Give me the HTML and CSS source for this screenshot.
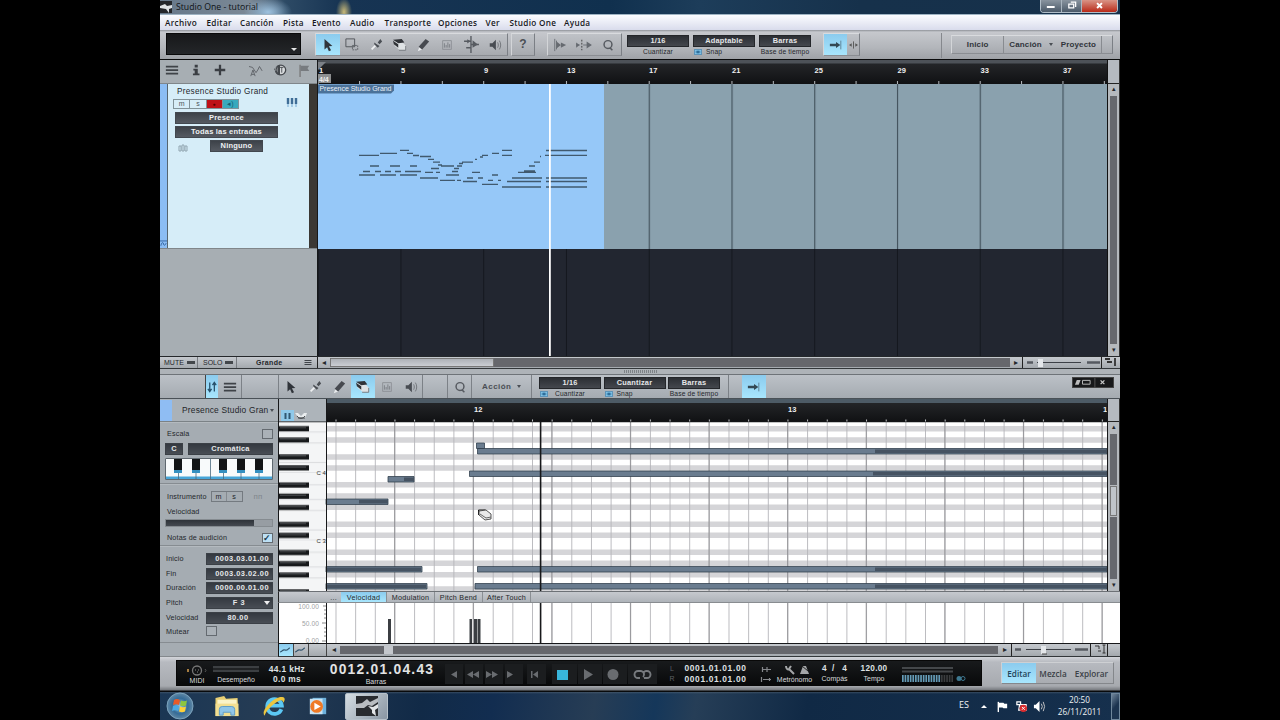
FILE: index.html
```
<!DOCTYPE html>
<html lang="es">
<head>
<meta charset="utf-8">
<title>Studio One - tutorial</title>
<link rel="stylesheet" href="styles.css">
</head>
<body>
<svg class="defs" width="0" height="0">
  <defs>
    <symbol id="i-arrow" viewBox="0 0 16 16"><path d="M4 1l9 8-4 .5 2.500 4.500-2.500 1-2-4.500L4 13z" fill="#30343a"/></symbol>
    <symbol id="i-range" viewBox="0 0 16 16"><path d="M1 1h10v9H1z" fill="none" stroke="#4a4e54"/><path d="M8.500 8.500h6v5h-6z" fill="none" stroke="#5a5e64" stroke-dasharray="2 1"/></symbol>
    <symbol id="i-split" viewBox="0 0 16 16"><path d="M3 13l6-6" stroke="#eef0f2" stroke-width="2"/><path d="M6 5l6 4-2 2-4-4zM10 5l3-4 2 3-3 3z" fill="#4a4e54"/></symbol>
    <symbol id="i-eraser" viewBox="0 0 16 16"><path d="M1 4l8-1 6 6v5H8L2 9z" fill="#dfe3e5"/><path d="M0 2l10-1 3 4-7 1zM0 3l6 4v4L1 7z" fill="#303338"/><path d="M7 14h7.500V9" fill="none" stroke="#6c7074"/></symbol>
    <symbol id="i-paint" viewBox="0 0 16 16"><path d="M2 15l2-5 3 3z" fill="#e9ebed"/><path d="M3 10l8-9 4 3-8 9z" fill="#474a50"/></symbol>
    <symbol id="i-mute" viewBox="0 0 16 16"><path d="M3 3h10v10H3z" fill="none" stroke="#8b8f95"/><path d="M5 11V6m2 5V8m2 3V5m2 6V7" stroke="#777b81"/></symbol>
    <symbol id="i-bend" viewBox="0 0 16 16"><path d="M7.500 0v16M1 5h6M3 11h4M8 8h7" stroke="#575b61" stroke-width="1.300"/><path d="M9 4l5 4-5 3zM4 3l3 2-3 2z" fill="#575b61"/></symbol>
    <symbol id="i-sound" viewBox="0 0 16 16"><path d="M2 6h3l4-4v12l-4-4H2z" fill="#484c52"/><path d="M11 5c1 2 1 4 0 6m2-8c2 3 2 7 0 10" fill="none" stroke="#6b6f75"/></symbol>
    <symbol id="i-lens" viewBox="0 0 16 16"><path d="M8 3a4.500 4.500 0 1 1 0 9a4.500 4.500 0 0 1 0-9M10 11l3 3" fill="none" stroke="#575b61" stroke-width="1.700"/></symbol>
    <symbol id="i-strip" viewBox="0 0 16 16"><path d="M2 1v14M4 3v10" stroke="#666a70"/><path d="M4 4l5 4-5 4zM9 5l6 3-6 3z" fill="#666a70"/></symbol>
    <symbol id="i-strip2" viewBox="0 0 20 16"><path d="M7.500 2v12" stroke="#333" stroke-dasharray="2 1.500"/><path d="M1 5l4 3-4 3zM13 4l6 4-6 4z" fill="#666a70"/><path d="M1 8h4M9 8h8" stroke="#666a70"/></symbol>
    <symbol id="i-follow" viewBox="0 0 16 16"><path d="M1 6.500h7V4.500l5 3.500-5 3.500v-2H1z" fill="#344954"/><path d="M13.500 3v10" stroke="#5a7d8e"/></symbol>
    <symbol id="i-list" viewBox="0 0 16 16"><path d="M1 4h14M1 8h14M1 12h14" stroke="#3f4348" stroke-width="2"/></symbol>
    <symbol id="i-keys" viewBox="0 0 14 10"><path d="M3 0v6M7 0v6M11 0v6" stroke="#3f6d96" stroke-width="2.400"/><path d="M3 6v3M7 6v3M11 6v3" stroke="#a4cbe6" stroke-width="2"/></symbol>
    <symbol id="i-curve" viewBox="0 0 12 8"><path d="M1 6c3 0 2-3 5-2s3-2 5-2" fill="none" stroke="#31536c" stroke-width="1.200"/></symbol>
  </defs>
</svg>
<div class="screen">
  <header class="titlebar">
    <svg class="logo" viewBox="0 0 12 12"><path d="M0 0h12v12H0z" fill="#24272b"/><path d="M0 5l5-2 2 2 5-1v3L9 8v4L6 8 0 7z" fill="#dfe3e6"/></svg>
    <span class="win-title">Studio One - tutorial</span>
    <div class="win-buttons">
      <span><svg viewBox="0 0 20 12"><path d="M6 6h8v2H6z" fill="#fff"/></svg></span>
      <span><svg viewBox="0 0 20 12"><path d="M7 4h5v4H7zM9 2h5v5" fill="none" stroke="#fff" stroke-width="1.300"/></svg></span>
      <span class="close"><svg viewBox="0 0 36 12"><path d="M15.500 3l5 5m0-5l-5 5" stroke="#fff" stroke-width="2"/></svg></span>
    </div>
  </header>
  <nav class="menubar">
    <span class="m1">Archivo</span><span class="m2">Editar</span><span class="m3">Canción</span><span class="m4">Pista</span><span class="m5">Evento</span><span class="m6">Audio</span><span class="m7">Transporte</span><span class="m8">Opciones</span><span class="m9">Ver</span><span class="m10">Studio One</span><span>Ayuda</span>
  </nav>

  <div class="toolbar">
    <div class="readout"><i></i></div>
    <div class="tools raised">
      <span class="on"><svg><use href="#i-arrow"/></svg></span><span><svg><use href="#i-range"/></svg></span><span><svg><use href="#i-split"/></svg></span><span><svg><use href="#i-eraser"/></svg></span><span><svg><use href="#i-paint"/></svg></span><span><svg><use href="#i-mute"/></svg></span><span><svg class="big"><use href="#i-bend"/></svg></span><span><svg><use href="#i-sound"/></svg></span>
    </div>
    <div class="help raised">?</div>
    <div class="strips raised"><svg><use href="#i-strip"/></svg><svg class="wide"><use href="#i-strip2"/></svg><svg><use href="#i-lens"/></svg></div>
    <div class="opt q"><b>1/16</b><em>Cuantizar</em></div>
    <div class="opt q"><b>Adaptable</b><em class="lead"><i class="led"></i>Snap</em></div>
    <div class="opt base"><b>Barras</b><em>Base de tiempo</em></div>
    <div class="follow raised"><span class="on"><svg><use href="#i-follow"/></svg></span><span class="half"><svg viewBox="0 0 10 12"><path d="M5 2v8" stroke="#555"/><path d="M0 6l3-2v4zM10 6L7 4v4z" fill="#555"/></svg></span></div>
    <div class="pages-wrap"><div class="pages raised"><span class="p1">Inicio</span><span class="p2">Canción</span><span class="p3"><i class="down"></i></span><span class="p4">Proyecto</span><span class="p5"></span></div></div>
  </div>

  <main class="arranger">
    <aside class="tracks">
      <div class="track-tools">
        <svg><use href="#i-list"/></svg>
        <svg viewBox="0 0 16 16"><path d="M6.500 2h3.500v3H6.500zM5 6.500h5V12h2v2H4.500v-2h2V8.500H5z" fill="#3a3e43"/></svg>
        <svg viewBox="0 0 16 16"><path d="M8 2v12M2 8h12" stroke="#3a3e43" stroke-width="2.600"/></svg>
        <svg class="auto" viewBox="0 0 16 16"><path d="M0 4l4 1 4 6 2-3 2-4 3 5" fill="none" stroke="#5a5e63"/><path d="M2 15l2.500-7L7 15M3 13h3" fill="none" stroke="#5a5e63"/></svg>
        <svg viewBox="0 0 16 16"><circle cx="9" cy="8" r="5.500" fill="#d6d9db" stroke="#44484d" stroke-width="1.500"/><path d="M8 2a6 6 0 0 0 0 12zM1 7l4-4v8z" fill="#44484d"/><path d="M8 5h4M10 5v6" stroke="#44484d"/></svg>
        <svg viewBox="0 0 16 16"><path d="M3.500 2v14" stroke="#777" stroke-width="1.500"/><path d="M4 3h10l-2 3 2 3H4z" fill="#777b7f"/></svg>
      </div>
      <div class="track">
        <div class="track-color"><svg viewBox="0 0 8 8"><path d="M0 .5h8M1 6c1-5 3-4 3-2s2 2 3-1" fill="none" stroke="#2b5f9e"/></svg></div>
        <div class="track-info">
          <div class="track-name">Presence Studio Grand</div>
          <div class="track-row"><div class="msr"><span>m</span><span>s</span><span class="rec">●</span><span class="mon">◂)</span></div><svg class="keysicon"><use href="#i-keys"/></svg></div>
          <div class="slot">Presence</div>
          <div class="slot">Todas las entradas</div>
          <div class="slot-row"><svg viewBox="0 0 10 8"><path d="M1 2h2v5H1zM4 1h2v6H4zM7 2h2v5H7z" fill="none" stroke="#91a5b0"/></svg><div class="slot small">Ninguno</div></div>
        </div>
        <div class="track-meter"></div>
      </div>
      <div class="track-void"></div>
    </aside>
    <section class="timeline">
      <svg viewBox="318 60 790 296" width="790" height="296">
        <defs>
          <linearGradient id="rul" x2="0" y2="1"><stop offset="0" stop-color="#27292c"/><stop offset="1" stop-color="#101113"/></linearGradient>
          <pattern id="bars" x="317.700" y="0" width="82.750" height="400" patternUnits="userSpaceOnUse"><path d="M.5 0v400" stroke="#42525c" stroke-width="1.300"/></pattern>
          <pattern id="barsd" x="317.700" y="0" width="82.750" height="400" patternUnits="userSpaceOnUse"><path d="M.5 0v400" stroke="#14171e"/></pattern>
          <pattern id="ticks" x="317.700" y="0" width="41.375" height="400" patternUnits="userSpaceOnUse"><path d="M.5 81v3" stroke="#b9bcc0"/></pattern>
        </defs>
        <path d="M318 60h790v24H318z" fill="url(#rul)"/><path d="M318 60h790v3.500H318z" fill="#4d5258"/>
        <path d="M318 80h790v4H318z" fill="url(#ticks)"/>
        <path d="M318 84h790v165H318z" fill="#8aa1ae"/><path d="M604 84h504v165H604z" fill="url(#bars)"/>
        <path d="M318 249h790v107H318z" fill="#222630"/><path d="M318 249h790v107H318z" fill="url(#barsd)"/>
        <path d="M318 84h286v165H318z" fill="#96c8f8"/>
        <path d="M318 62h8l-8 8z" fill="#7b8086"/>
        <path d="M318 74h13v9h-13z" fill="#8d8f90"/>
        <path d="M318 84.500h76v6l-3 3h-73z" fill="#4b7299"/>
        <g class="ruler-num"><text x="319" y="72.500">1</text><text x="401" y="72.500">5</text><text x="484" y="72.500">9</text><text x="567" y="72.500">13</text><text x="649" y="72.500">17</text><text x="732" y="72.500">21</text><text x="814.500" y="72.500">25</text><text x="897.500" y="72.500">29</text><text x="980.500" y="72.500">33</text><text x="1063" y="72.500">37</text></g>
        <text class="sig" x="319" y="81.500">4/4</text>
        <text class="clip-name" x="319.500" y="91.200" textLength="72">Presence Studio Grand</text>
        <g stroke="#40596e" stroke-width="1.300" fill="none">
          <path d="M359 155.300h20M380 153.400h17M400 150.400h9M407 153.300h6M413 155.500h6M420 156.500h11M428 159.300h6M433 162.200h7M438 165h4M441 166h13M457 166h5M459 163.500h4M462 162.200h11M475 159.400h2M480 157h3M482 155.300h6M492 153.400h7M502 150.400h10M502 155.300h10"/>
          <path d="M359 175h16M380 175h16M400 175h17M370 166h9M390 166h10M410 166h7M363 171.500h7M375 171.500h6M385 171.500h6M395 171.500h6M405 171.500h16M425 172.300h8M436 172.300h4M431 168.500h8M420 178h18M440 180.300h15M446 175h13M452 171.500h6M454 168.500h5M457 180.300h4M463 181.500h14M467 178h6M478 178h5M472 172.300h8M482 184.300h16M488 180.300h5M492 175h6M498 180.300h3"/>
          <path d="M502 187h39M546 187h41M507 181.500h34M546 181.500h41M512 178h30M546 178h41M518 172.300h18M524 171h11M529 166h6M534 162.200h6M540 156.500h1M545 155.300h42M546 150.500h41"/>
        </g>
        <path d="M549 84h1.800v272H549z" fill="#fff"/>
        <path d="M1107 60h1v296h-1z" fill="#111"/>
      </svg>
    </section>
    <div class="vscroll"><div class="corner"></div><span>▴</span><i></i><span>▾</span></div>
  </main>

  <div class="hbar">
    <div class="cell mute">MUTE<i></i></div><div class="cell solo">SOLO<i></i></div><div class="cell size">Grande<svg><use href="#i-list"/></svg></div>
    <div class="larr">◂</div><div class="htrack"><i class="thumb-wide"></i></div><div class="larr r">▸</div>
    <div class="zoomer"><svg viewBox="0 0 78 11"><path d="M4 5.500h6M64 5.500h13" stroke="#555960" stroke-width="2.500"/><path d="M14 5.500h44" stroke="#3c4046"/><path d="M15 2h5v8h-5z" fill="#e4e7ea"/></svg></div><div class="fit"><svg viewBox="0 0 12 10"><path d="M0 2h5M2 5h5M10 1v8" stroke="#333" stroke-width="1.800"/></svg></div>
  </div>
  <div class="splitter"><i></i></div>

  <div class="edit-tools">
    <div class="blank1"></div>
    <span class="on narrow"><svg viewBox="0 0 12 14"><path d="M3 2v9M1 9l2 3 2-3M8 12V3M6 5l2-3 2 3" fill="none" stroke="#28516b" stroke-width="1.400"/></svg></span>
    <span class="rule"><svg><use href="#i-list"/></svg></span><div class="blank2 rule"></div>
    <span><svg><use href="#i-arrow"/></svg></span><span><svg><use href="#i-split"/></svg></span><span><svg><use href="#i-paint"/></svg></span><span class="on"><svg><use href="#i-eraser"/></svg></span><span><svg><use href="#i-mute"/></svg></span><span class="rule"><svg><use href="#i-sound"/></svg></span><div class="blank3 rule"></div><span class="rule"><svg><use href="#i-lens"/></svg></span>
    <div class="action rule">Acción<i class="down"></i></div>
    <div class="opt q"><b>1/16</b><em class="lead2"><i class="led"></i>Cuantizar</em></div>
    <div class="opt q"><b>Cuantizar</b><em class="lead"><i class="led"></i>Snap</em></div>
    <div class="opt base"><b>Barras</b><em>Base de tiempo</em></div>
    <div class="blank4 rule"></div><div class="blank5"></div>
    <span class="on"><svg><use href="#i-follow"/></svg></span>
    <div class="dock"><svg viewBox="0 0 42 10"><path d="M2 7l2-5h4L6 7z" fill="#bbb"/><path d="M10 2.500h8v4h-8z" fill="none" stroke="#bbb"/><path d="M23 0v10" stroke="#555"/><path d="M29 2.500l4 4m0-4l-4 4" stroke="#ccc" stroke-width="1.300"/></svg></div>
  </div>

  <section class="editor">
    <aside class="inspector">
      <div class="part"><i></i><span>Presence Studio Gran</span><b class="down"></b></div>
      <div class="group scale">
        <div class="line"><span>Escala</span><i class="check"></i></div>
        <div class="line keyline"><b class="dark root">C</b><b class="dark mode">Cromática</b></div>
        <svg class="octave" viewBox="0 0 108 22"><path d="M0 0h108v22H0z" fill="#f8fafb"/><path d="M0 18.500h108v3H0z" fill="#47a5d8"/><path d="M13.500 14v7M31 14v7M45.500 0v21M58.500 14v7M76 14v7M94 14v7" stroke="#4a6b80" stroke-width=".8"/><path d="M9 1h8v14H9zM27 1h8v14h-8zM54 1h8v14h-8zM72 1h8v14h-8zM90 1h8v14h-8z" fill="#121416"/><path d="M9 12h8v3H9zM27 12h8v3h-8zM54 12h8v3h-8zM72 12h8v3h-8zM90 12h8v3h-8z" fill="#348fc0"/><path d="M.5.5h107v21H.5z" fill="none" stroke="#5f686f"/></svg>
      </div>
      <div class="group instrument">
        <div class="line"><span>Instrumento</span><div class="ms"><u>m</u><u>s</u></div><small>ᴨᴨ</small></div>
        <div class="line vel">Velocidad</div>
        <div class="vbar"><i></i></div>
        <div class="line aud"><span>Notas de audición</span><i class="check lit">✓</i></div>
      </div>
      <div class="group fields">
        <div class="frow"><span>Inicio</span><b class="dark">0003.03.01.00</b></div>
        <div class="frow"><span>Fin</span><b class="dark">0003.03.02.00</b></div>
        <div class="frow"><span>Duración</span><b class="dark">0000.00.01.00</b></div>
        <div class="frow"><span>Pitch</span><b class="dark mid pitch">F 3<i class="down"></i></b></div>
        <div class="frow"><span>Velocidad</span><b class="dark mid">80.00</b></div>
        <div class="frow"><span>Mutear</span><i class="check"></i></div>
      </div>
    </aside>
    <div class="roll">
      <svg viewBox="278 399 830 192" width="830" height="192">
        <defs>
          <pattern id="g16" x="335.500" y="0" width="19.650" height="700" patternUnits="userSpaceOnUse"><path d="M.5 0v700" stroke="#b4b4b8" stroke-width=".9"/></pattern>
          <pattern id="g4" x="394.100" y="0" width="78.600" height="700" patternUnits="userSpaceOnUse"><path d="M.5 0v700" stroke="#88888c" stroke-width=".8"/></pattern>
          <pattern id="rt" x="335.500" y="0" width="19.650" height="700" patternUnits="userSpaceOnUse"><path d="M.5 419.500v3" stroke="#c4c6c9"/></pattern>
          <pattern id="pk" x="279" y="405.500" width="48" height="67.500" patternUnits="userSpaceOnUse"><path d="M0 11.800h48M0 26.500h48M0 37.500h48M0 57h48M0 67.300h48" stroke="#d3d5d7" stroke-width=".8"/><path d="M0 12h30M0 23.200h30M0 34.500h30M0 51.400h30M0 62.500h30" stroke="#17191b" stroke-width="5.200"/><path d="M1 11h26M1 22.200h26M1 33.500h26M1 50.400h26M1 61.500h26" stroke="#54575a" stroke-width="1"/></pattern>
        </defs>
        <path d="M278 399h49v23h-49z" fill="#adb4ba"/><path d="M281 410h13v11h-13z" fill="#8fc9ea"/><path d="M285.500 413v6M289.500 413v6" stroke="#315872" stroke-width="2"/><path d="M295 413h3l3 3 3-3h3l-2 5h-6z" fill="#e9edef"/><path d="M297 416c2 3 6 3 8 0M298 418h7" stroke="#44484c" fill="none"/>
        <path d="M327 399h781v23H327z" fill="url(#rul)"/><path d="M327 399h781v4H327z" fill="#4d5b66"/><path d="M327 418h781v4H327z" fill="url(#rt)"/>
        <g class="ruler-num"><text x="474" y="411.500">12</text><text x="788" y="411.500">13</text><text x="1103" y="411.500">1</text></g>
        <path d="M279 422h48v169h-48z" fill="#f4f5f6"/><path d="M279 422h48v169h-48z" fill="url(#pk)"/>
        <g class="oct"><text x="316.500" y="475">C 4</text><text x="316.500" y="542.500">C 3</text></g>
        <path d="M327 422h781v169H327z" fill="#fff"/>
        <g stroke="#d5d5d8" stroke-width="5.400"><path d="M327 428.700h781M327 440h781M327 457h781M327 468h781M327 484.700h781M327 496h781M327 507.300h781M327 524.300h781M327 535.300h781M327 552.300h781M327 563.300h781M327 574.700h781M327 589h781"/></g>
        <path d="M327 422h781v169H327z" fill="url(#g16)"/><path d="M327 422h781v169H327z" fill="url(#g4)"/>
        <g stroke="#34414f" stroke-width=".8" fill="#6a7c8f">
          <path d="M476.500 443h8v5.500h-8zM477.500 448.500H1107v5.500H477.500zM469.500 471H1107v5.500H469.500zM388 476.500h26v5.500h-26zM326 499h62v5.500h-62zM326 566.500h96v5.500h-96zM477.500 566.500H1107v5.500H477.500zM326 583.500h101v5.500H326zM475 583.500h632v5.500H475z"/>
        </g>
        <g fill="#465362"><path d="M875 449.500h232v3.600H875zM873 472h234v3.600H873zM875 567.500h232v3.600H875zM875 584.500h232v3.600H875zM404 477.500h10v3.600h-10zM359 500h29v3.600h-29zM326 567.500h95v3.600h-95zM326 584.500h100v3.600H326z"/></g>
        <path d="M539.800 422h1.600v169h-1.600z" fill="#17181a"/>
        <path d="M478.500 515v-5h7" fill="none" stroke="#111"/><path d="M479 511l7-1 5 4v5l-6 1-6-5z" fill="#e9e9e9" stroke="#444" stroke-width=".9"/><path d="M480 514l6 4 5-1" stroke="#666" fill="none"/>
        <path d="M278 399h1v192h-1zM326 399h1v192h-1zM1107 399h1v192h-1zM278 421.500h830v.8H278z" fill="#17181a"/>
      </svg>
      <div class="tabs"><span class="dots">...</span><span class="on t1">Velocidad</span><span class="t1">Modulation</span><span class="t1">Pitch Bend</span><span class="t1">After Touch</span></div>
      <svg viewBox="278 603 842 41" width="842" height="41">
        <path d="M278 603h842v41H278z" fill="#fff"/><path d="M327 603h793v41H327z" fill="url(#g16)"/><path d="M327 603h793v41H327z" fill="url(#g4)"/>
        <g class="scale-num"><text x="319" y="608.500">100.00</text><text x="319" y="625.500">50.00</text><text x="319" y="643">0.00</text></g>
        <path d="M323 606h3M324 610h2M324 614h2M324 618h2M322 623h4M324 628h2M324 632h2M324 636h2M322 641h4" stroke="#555" stroke-width=".7"/>
        <path d="M388 619h3v25h-3zM469.500 619h2.500v25h-2.500zM474 619h3v25h-3zM477.500 619h3v25h-3z" fill="#3b3e42"/>
        <path d="M539.800 603h1.600v41h-1.600zM278 603h1v41h-1zM326 603h1v41h-1zM278 643h842v1H278z" fill="#17181a"/>
      </svg>
      <div class="hbar2">
        <div class="lane on"><svg><use href="#i-curve"/></svg></div><div class="lane"><svg><use href="#i-curve"/></svg></div><div class="lane w"></div>
        <div class="larr">◂</div><div class="htrack"><i class="thumb-tiny"></i></div><div class="larr r">▸</div>
        <div class="zoomer"><svg viewBox="0 0 78 11"><path d="M3 5.500h6M63 5.500h13" stroke="#555960" stroke-width="2.500"/><path d="M14 5.500h45" stroke="#3c4046"/><path d="M29 2h5v8h-5z" fill="#e4e7ea"/><path d="M30 10h5" stroke="#444"/></svg></div><div class="fit"><svg viewBox="0 0 12 10"><path d="M1 2h4v3M4 7h3M10 1v8M8.500 1h3M8.500 9h3" fill="none" stroke="#333"/></svg></div><div class="end"></div>
      </div>
    </div>
    <div class="vscroll lower"><div class="corner"></div><span>▴</span><i></i><em></em><i class="rest"></i><span>▾</span></div>
  </section>

  <footer class="transport">
    <div class="console">
      <div class="col midi"><svg viewBox="0 0 20 11"><circle cx="10" cy="5.500" r="4.500" fill="none" stroke="#777" stroke-width="1.300"/><path d="M8 5h1M11 5h1M10 7h1" stroke="#888"/><path d="M1 4v3" stroke="#d8a050" stroke-width="1.500"/><path d="M18 4l1 1.500-1 1.500" fill="none" stroke="#555"/></svg><span>MIDI</span></div>
      <div class="col perf"><div class="meter"></div><span>Desempeño</span></div>
      <div class="col rate"><b>44.1 kHz</b><b>0.0 ms</b></div>
      <div class="col clock"><strong>0012.01.04.43</strong><span>Barras</span></div>
      <svg class="buttons" viewBox="0 0 212 26">
        <path d="M0 3h18v20H0zM20 3h18v20H20zM40 3h18v20H40zM60 3h18v20H60zM82 3h19v20H82zM107 3h25v20h-25zM133 3h24v20h-24zM158 3h24v20h-24zM183 3h29v20h-29z" fill="#1b1d1f"/>
        <g fill="#696c70"><path d="M12 10v7l-6-3.500zM28 10v7l-6-3.500zM34 10v7l-6-3.500zM41 10v7l6-3.500zM47 10v7l6-3.500zM62 10v7l6-3.500zM93 10v7l-5-3.500zM86 10h1.500v7H86z"/><path d="M139 8v11l9-5.500z"/><circle cx="168" cy="13.500" r="5.500"/></g>
        <path d="M112 9h11v10h-11z" fill="#38b6dc"/>
        <path d="M195 17h-2a3.500 3.500 0 0 1 0-7h3a3.500 3.500 0 0 1 2 6M199 11a3.500 3.500 0 0 1 2-1h1a3.500 3.500 0 0 1 0 7h-3" fill="none" stroke="#777a7e" stroke-width="1.900"/>
      </svg>
      <div class="col lr"><span>L</span><span>R</span></div>
      <div class="col loc"><b>0001.01.01.00</b><b>0001.01.01.00</b></div>
      <svg class="punch" viewBox="0 0 12 26"><path d="M2.500 7v5M3 9.500h8M7 7v5M1.500 17v5M3 19.500h8M9.500 18v3" stroke="#85888c" stroke-width="1.200"/></svg>
      <div class="col metro"><svg viewBox="0 0 34 11"><path d="M8 2c0 3 2 4 3 3l5 5M11 5l2-3" stroke="#a4a6a8" stroke-width="2" fill="none"/><path d="M22 10l3-8h3l3 8z" fill="#a4a6a8"/><path d="M24 2l6 5" stroke="#222"/></svg><span>Metrónomo</span></div>
      <div class="col sign"><b>4 &nbsp;/ &nbsp;&nbsp;4</b><span>Compás</span></div>
      <div class="col tempo"><b>120.00</b><span>Tempo</span></div>
      <svg class="levels" viewBox="0 0 66 26"><path d="M0 7h51v2H0zM0 10.500h51v2H0z" fill="#44474a"/><path d="M0 18.500h39" stroke="#659bb7" stroke-width="7" stroke-dasharray="1.700 .9"/><path d="M39 18.500h12" stroke="#3a3c3e" stroke-width="7" stroke-dasharray="1.700 .9"/><circle cx="57" cy="18.500" r="2.500" fill="#3e7890"/><circle cx="61" cy="18.500" r="2" fill="none" stroke="#3e7890"/></svg>
    </div>
    <div class="views"><span class="on">Editar</span><span class="v2">Mezcla</span><span class="v3">Explorar</span></div>
  </footer>

  <div class="taskbar">
    <svg class="orb" viewBox="0 0 28 28"><defs><radialGradient id="orbg"><stop offset="0" stop-color="#8ec4e6"/><stop offset=".6" stop-color="#356b96"/><stop offset="1" stop-color="#5f87a4"/></radialGradient></defs><circle cx="14" cy="14" r="13" fill="url(#orbg)" stroke="#7ba3bd"/><path d="M8 8c2-1.500 4-1 6 0l-1 5c-2-1-4-1-6 0z" fill="#e85b28"/><path d="M15 8.500c2 1 4 1 6 0l-1 5c-2 1-4 1-6 0z" fill="#8dc63f"/><path d="M7 14c2-1 4-1 6 0l-1 5c-2-1-4-1-6 0z" fill="#4ba9e3"/><path d="M14 14.500c2 1 4 1 6 0l-1 5c-2 1-4 1-6 0z" fill="#ffd039"/></svg>
    <svg class="folder" viewBox="0 0 26 24"><path d="M1 3l9-2 2 3 12-1 1 19H1z" fill="#e8cf75"/><path d="M3 5h20v5H3z" fill="#faf3c8"/><path d="M1 9h24v13H1z" fill="#f3df91"/><path d="M5 21v-6q0-3 3-3h10q3 0 3 3v6h-4v-3H9v3z" fill="#8fc5e8" stroke="#5c9cc8"/></svg>
    <svg class="ie" viewBox="0 0 26 24"><path d="M21 15a8 8 0 1 1 .5-4H8" fill="none" stroke="#5cc8f4" stroke-width="4"/><path d="M3 22C-3 17 15-1 23 2c3 1 1 5 0 6 0-5-5-3-11 2S3 20 3 22z" fill="#ecc63f"/></svg>
    <svg class="wmp" viewBox="0 0 22 22"><path d="M5 2h15v18H5z" fill="#6db1dc"/><path d="M2 3h14v17H2z" fill="#c8e3f4"/><circle cx="9.500" cy="11.500" r="7" fill="#ef7a26"/><path d="M7 7.500v8l7-4z" fill="#fff"/></svg>
    <div class="task"><svg viewBox="0 0 22 20"><path d="M0 0h22v20H0z" fill="#282b2f"/><path d="M0 8l6-1 5-4 3 3 8-4v4l-6 4-4-1-4 3H0z" fill="#b9bdc1"/><path d="M12 10l5 1 5-3v4l-3 2 1 6-4-3v-3z" fill="#e1e4e6"/></svg></div>
    <div class="tray"><span class="lang">ES</span><i class="up"></i><svg viewBox="0 0 14 14"><path d="M2.500 2v11" stroke="#fff" stroke-width="1.500"/><path d="M3 3h5l1 1h3v5H8L7 8H3z" fill="#fff"/></svg><svg class="net" viewBox="0 0 14 14"><path d="M2 2h4v3H2zM5 5h7v6H4z" fill="none" stroke="#fff" stroke-width="1.300"/><circle cx="9" cy="9" r="4" fill="#d92c2f"/><path d="M7.500 7.500l3 3m0-3l-3 3" stroke="#fff"/></svg><svg class="snd" viewBox="0 0 14 14"><path d="M1 5h2l4-4v12L3 9H1z" fill="#fff"/><path d="M9 4q2 3 0 6M11 2q3 5 0 10" fill="none" stroke="#ccc"/></svg><div class="date"><span>20:50</span><span>26/11/2011</span></div><div class="desk"></div></div>
  </div>
</div>
</body>
</html>
```
FILE: styles.css
```
*{box-sizing:border-box}
body{margin:0;background:#000;width:1280px;height:720px;overflow:hidden}
svg{display:block;flex:none}
.defs{position:absolute}
i,em{font-style:normal}
.screen{width:960px;height:720px;margin:0 auto;display:flex;flex-direction:column;font-family:"Liberation Sans",Arial,sans-serif;font-size:7.5px;color:#24272b;overflow:hidden;white-space:nowrap}
.screen>*{flex:none}
.down{display:inline-block;border:3px solid transparent;border-top:4px solid #4a4e54;border-bottom:0}

.titlebar{height:15px;display:flex;align-items:center;background:radial-gradient(ellipse 8px 14px at 184px 12px,#c9ba79,transparent),radial-gradient(ellipse 24px 14px at 108px 12px,#9ec2df,transparent),linear-gradient(90deg,#66788a 0,#7c8996 90px,#2d4a65 125px,#173453 180px,#10304e 450px,#1d3d5a 540px,#16314b 700px,#16304a);border-bottom:1px solid #9eb3c3}
.logo{width:12px;height:12px}
.win-title{font:500 8.7px "Open Sans",sans-serif;margin-left:4px;color:#0e1216;letter-spacing:0}
.win-buttons{margin-left:auto;display:flex;height:13px;align-self:flex-start;border:1px solid #b1bec8;border-top:0;border-radius:0 0 4px 4px;overflow:hidden;margin-right:2px}
.win-buttons span{width:20.5px;background:linear-gradient(#89949f,#4b5a69);border-right:1px solid #a9b5bf}
.win-buttons .close{width:35px;background:linear-gradient(#d99486,#b92a18);border:0}
.win-buttons svg{height:12px;width:100%}
.menubar{height:15px;background:linear-gradient(#fbfcff,#d9dcec);padding-left:5px;display:flex;align-items:center;font:600 8.2px "Open Sans",sans-serif;letter-spacing:.3px;color:#16181c}
.m1{width:41.5px}.m2{width:33.5px}.m3{width:43px}.m4{width:29px}.m5{width:38px}.m6{width:34.5px}.m7{width:53.5px}.m8{width:47.5px}.m9{width:24px}.m10{width:54.5px}

.toolbar{height:30px;background:linear-gradient(#8f9298 0,#c6c8cd 2px,#b3b6bb 60%,#9fa2a7);border-bottom:1.5px solid #0b0c0d;display:flex;align-items:flex-start;padding:3px 0 0 6px}
.readout{width:135px;height:22px;background:linear-gradient(#17181a,#242629);border:1px solid #0a0a0b;display:flex;justify-content:flex-end;align-items:flex-end;padding:3px}
.readout i{border:3px solid transparent;border-top:3px solid #e5e5e5;border-bottom:0}
.raised{border:1px solid;border-color:#d9dbde #7b7f85 #8a8d92 #d3d5d8;background:linear-gradient(#bfc2c7,#a7aaaf)}
.on{background:linear-gradient(#8bcbee,#a8e6fd)!important}
.tools{margin-left:14px;width:193px;height:23px;display:flex}
.tools span{width:24px;height:21px;display:flex;align-items:center;justify-content:center}
.tools svg,.strips svg,.follow svg,.edit-tools span svg{width:14px;height:14px}
.tools svg.big{width:17px;height:17px}
.help{width:24px;height:23px;margin-left:3px;font:bold 12px/21px "Liberation Sans";color:#4b4f55;text-align:center}
.strips{margin-left:12px;width:75px;height:23px;display:flex;align-items:center;gap:7px;padding-left:5px}
.strips svg.wide{width:20px}
.opt{display:flex;flex-direction:column;margin-right:4px}
.toolbar .opt{padding-top:2px}
.toolbar .strips+.opt{margin-left:5px}
.opt.q{width:62px}.opt.base{width:52px}
.opt b{height:12px;background:linear-gradient(#2c2f34,#44474d);border:1px solid #24262a;color:#e5e6e8;font:bold 7.4px/10px "Liberation Sans";letter-spacing:.2px;text-align:center}
.opt em{font-size:6.7px;line-height:10px;height:9px;text-align:center;letter-spacing:.15px}
.opt em.lead,.opt em.lead2{text-align:left;display:flex;align-items:center}
.led{width:8px;height:6px;background:radial-gradient(#2f6f9c 1px,#7fc2e6 3px);border:1px solid #5d93b8;margin:1px 4px 0 1px}
.lead2 .led{margin-right:7px}
.follow{width:37px;height:23px;display:flex;margin-left:8px}
.follow span{width:24px;display:flex;align-items:center;justify-content:center}
.follow .half{width:12px}.follow .half svg{width:9px}
.pages-wrap{margin-left:81px;height:25px;border-left:1px solid #85888d;padding:2px 0 0 9px}
.pages{display:flex;height:19px;width:162px;font:bold 8px/17px "Liberation Sans";letter-spacing:.15px;text-align:center;color:#30343a}
.pages span{border-right:1px solid #888b90;display:block}
.p1{width:53px}.p2{width:43px}.p3{width:9px}.p4{width:47px}.pages .p5{border:0;width:10px}
.pages .p2,.pages .p3{border-right:0}.pages .down{border-width:3px 2.5px 0;margin-bottom:1px}

.arranger{height:296px;display:flex;background:#a7aeb3}
.tracks{width:158px;display:flex;flex-direction:column;border-right:1px solid #16181a}
.track-tools{height:23px;display:flex;padding:3px 0 0 5px;gap:10px}
.track-tools svg{width:14px;height:14px}
.track-tools .auto{margin-left:12px}
.track{height:166px;display:flex;border-top:1px solid #80868a;border-bottom:1px solid #80868a}
.track-color{width:8px;background:#8bbdf4;border-right:1px solid #56656f;display:flex;align-items:flex-end}
.track-color svg{width:7px;height:8px}
.track-info{width:141px;background:#d6edf8;padding:2px 0 0 6px}
.track-name{font-size:8.2px;line-height:11px;letter-spacing:.29px;padding-left:3px}
.track-row{display:flex;justify-content:space-between;padding-right:10px;margin-top:0}
.msr{display:flex;width:66px;height:10px;margin-top:2px;margin-left:-1px;border:1px solid #819299}
.msr span{flex:1;text-align:center;font-size:7px;line-height:8px;border-right:1px solid #819299;color:#4b555a}
.msr .rec{background:#bf1118;color:#500;font-size:5px}.msr .mon{background:#38a9bd;color:#165b71;border:0}
.keysicon{width:14px;height:12px}
.slot{width:103px;height:12px;margin:0 0 2px 1px;background:linear-gradient(#3d4249,#555a62);border:1px solid #42484f;color:#eef0f2;font:bold 7.5px/10px "Liberation Sans";letter-spacing:.2px;text-align:center}
.track-row+.slot{margin-top:3px}
.slot-row{display:flex}
.slot-row svg{width:10px;height:8px;margin:4px 0 0 4px}
.slot.small{width:53px;margin-left:22px}
.track-meter{width:8px;background:#3b3834}
.timeline{width:790px}
.ruler-num text{fill:#eee;font:bold 7.5px "Liberation Sans"}
.sig{fill:#f2f2f2;font:bold 7px "Liberation Sans"}
.clip-name{fill:#e8f0f8;font:7px "Liberation Sans"}
.vscroll{width:12px;display:flex;flex-direction:column;background:#b5b9bd;border-right:1px solid #333;text-align:center;font-size:7px;line-height:10px}
.vscroll .corner{height:24px;background:#b5bac0;border-bottom:1px solid #222}
.vscroll i{flex:1;margin:1px 2px;background:#66686d}
.vscroll span{height:11px}

.hbar,.hbar2{height:13px;display:flex;align-items:stretch;background:linear-gradient(#c5c9ce,#a4a9ae);border-top:1px solid #25282b;border-bottom:1px solid #33373a}
.cell{border-right:1px solid #777b80;font-weight:bold;font-size:7px;line-height:11px;display:flex;align-items:center;gap:3px}
.cell i{width:8px;height:3px;background:#43474b}
.mute{width:38px;padding-left:4px;font-weight:normal}.solo{width:39px;padding-left:5px;font-weight:normal}
.size{width:81px;padding-left:19px;border-color:#222;letter-spacing:.35px}.size svg{width:8px;height:9px;margin-left:18px}
.larr{width:12px;text-align:center;line-height:11px;font-size:8px}
.htrack{background:#66676c;margin:1px 0}
.hbar .htrack{width:680px}
.thumb-wide{display:block;height:9px;width:164px;border-radius:1px;background:linear-gradient(#adb1b7,#cbced3);border:1px solid #777}
.zoomer{border-left:1px solid #222;border-right:1px solid #222;width:80px}
.zoomer svg{width:78px;height:11px}
.fit svg{width:12px;height:10px;margin-left:3px}
.splitter{height:6px;background:#aeb3b8;border-bottom:1px solid #6e7378;display:flex;justify-content:center;align-items:center}
.splitter i{width:33px;height:3px;background:repeating-linear-gradient(90deg,#7d8287 0 1px,transparent 1px 2px)}

.edit-tools{height:24px;display:flex;background:linear-gradient(#bcc1c7,#a5abb1);border-bottom:1px solid #4a5157;align-items:stretch}
.edit-tools>span{width:24px;display:flex;align-items:center;justify-content:center}
.edit-tools>.narrow{width:12px}.edit-tools .narrow svg{width:11px}
.blank1{width:46px;border-right:1px solid #444}.blank2{width:37px}.blank3{width:25px}.blank4{width:6px}.blank5{width:13px}
.rule{border-right:1px solid #7c8187}
.action{width:60px;padding-left:10px;display:flex;align-items:center;font-size:8px;letter-spacing:.45px;gap:6px;font-weight:bold;color:#4a4e54;margin-right:7px}
.action .down{border-width:3px 2.5px 0}
.edit-tools .opt{padding-top:2px}.edit-tools .opt.q{margin-right:2.5px}
.edit-tools .opt.base{margin-right:3px}
.dock{margin:2px 0 0 306px;width:42px;height:11px;background:#17181a;border:1px solid #444}

.editor{height:258px;display:flex;width:960px;background:#a5acb2}
.inspector{width:118px;border-bottom:1px solid #84898d}
.part{height:23px;display:flex;align-items:center;font-size:8.4px;border-bottom:1px solid #7b8286;background:#abb2b8}
.part i{width:12px;height:21px;background:#8fbdf3}.part span{margin:0 2px 0 10px;letter-spacing:.2px}.part .down{border-width:3px 2.5px 0}
.group{padding:0 5px;border-bottom:1px solid #868c91;border-top:1px solid #b4babf;font-size:7.2px;letter-spacing:.15px}
.scale{height:62px;padding-top:5px}
.line{display:flex;align-items:center;justify-content:space-between;height:11px;padding-left:2px}
.check{width:11px;height:10px;border:1px solid #646a70;background:#aab1b7;line-height:8px;font-size:9px;text-align:center}
.lit{background:#bde0f5;color:#173b50;font-weight:bold}
.dark{background:linear-gradient(#343940,#484d54);border:1px solid #3b4046;color:#e6e8ea;font:bold 7.4px/10px "Liberation Sans";letter-spacing:.25px;text-align:center;height:12px}
.fields .dark{letter-spacing:.5px}
.keyline{height:12px;margin-top:4px;padding:0}.root{width:18px}.mode{width:85px}
.octave{width:108px;height:22px;margin-top:3px}
.instrument{height:62px;padding-top:6px}
.instrument .line{justify-content:flex-start}
.ms{display:flex;margin-left:4px;border:1px solid #747a80}.ms u{width:15px;height:9px;text-decoration:none;text-align:center;line-height:9px;border-right:1px solid #858a90}.ms u:last-child{border:0}
.line small{font-size:8px;margin-left:11px;color:#81878d}
.vel{margin-top:4px}
.vbar{height:8px;margin-top:2px;background:#979da3;border:1px solid #858b90}.vbar i{display:block;height:6px;width:88px;background:linear-gradient(#2e3339,#444950)}
.instrument .aud{margin-top:5px;justify-content:space-between}
.fields{height:97px;padding-top:6px}
.frow{height:14.7px;display:grid;grid-template-columns:41px 67px;align-items:start;line-height:11px}
.frow>span{padding-left:1px}
.frow .dark{text-align:right;padding-right:3px}.frow .mid{text-align:center}
.pitch{display:flex;justify-content:flex-end;gap:19px}.pitch .down{border-top-color:#eee;margin:3px -1px 0 0}
.roll{width:830px;display:flex;flex-direction:column}
.tabs{height:12px;width:842px;display:flex;background:linear-gradient(#c6c9ce,#aeb3b9);border-top:1px solid #6d7176;border-bottom:1px solid #888c90;font-size:7.2px;line-height:11px;text-align:center;letter-spacing:.25px;border-left:1px solid #222}
.dots{width:62px;text-align:right;padding-right:4px}.t1{width:48px;border-right:1px solid #8b8f94}.tabs .on{width:46px}
.oct text{font:6px "Liberation Sans";fill:#333}
.scale-num text{font:6.6px "Liberation Sans";fill:#a0a2a5;text-anchor:end;letter-spacing:.1px}
.hbar2{width:842px;border-left:1px solid #17181a;border-top:0}
.lane{width:15px;border-right:1px solid #444;display:flex;align-items:center}.lane svg{width:12px;height:8px}.lane.w{width:18px}
.hbar2 .htrack{width:658px;margin:2px 0}
.hbar2 .larr{width:13px}
.thumb-tiny{display:block;width:9px;height:8px;background:#c4c7cc;margin-left:44px}
.fit{width:17px}.hbar2 .fit{width:16px}.end{border-left:1px solid #222}
.lower{height:192px}.lower .corner{height:23px}.lower i{flex:none;height:51px}.lower em{height:31px;background:#bfc4c9;border:1px solid #777;margin:0 2px}.lower .rest{height:62px}

.transport{height:35px;display:flex;background:linear-gradient(#d3d5da 0,#b7bac0 5px,#a7aaaf 29px,#777a7f 33px,#080a0c 34px);padding:3px 0 0 16px}
.console{width:806px;height:26px;background:linear-gradient(#181a1c,#08090a);display:flex;color:#d9dbdd;border:1px solid #080808}
.col{display:flex;flex-direction:column;align-items:center;line-height:10px;font-size:7px}
.col b{font-size:7.7px;letter-spacing:.3px;line-height:11px;color:#dfe1e3}
.midi{width:40px;padding-top:4px}.midi svg{width:20px;height:11px}
.perf{width:38px;padding-top:5px}.meter{width:46px;height:7px;background:linear-gradient(#3c3f42 40%,#202224 40% 60%,#3c3f42 60%);margin-bottom:3px}
.rate{width:64px;padding-top:3px}.rate b{line-height:10px;font-size:8.4px}
.rate b:first-child{letter-spacing:.35px}
.clock{width:126px;padding-top:1px}.clock strong{font:bold 13.8px/16px "Liberation Sans";letter-spacing:1.25px;color:#e2e3e4}.clock span{line-height:7px;margin-right:12px}
.buttons{width:212px;height:26px}
.lr{width:18px;padding-top:3px;margin-left:6px;color:#5d6064}
.loc{width:69px;padding-top:2px}.loc b{font-size:8.4px;letter-spacing:.65px;line-height:10.5px}
.punch{width:12px;height:26px;margin:-1px 0 0 10px}
.metro{width:45px;padding-top:3px}.metro svg{width:34px;height:11px}.metro span,.sign span,.tempo span{line-height:9px}
.sign{width:35px;padding-top:2px}.tempo{width:44px;padding-top:2px}.tempo b{font-size:8.2px}.sign b{font-size:8.2px}
.levels{width:66px;height:26px;margin:-1px 0 0 6px}
.views{display:flex;margin:2px 0 0 19px;width:113px;height:22px;border:1px solid;border-color:#ced0d3 #84878b #84878b #ced0d3;font:600 8.2px/21px "Open Sans",sans-serif;text-align:center;color:#3c4147}
.views .on{width:34px;color:#1f4458}.v2{width:34px}.v3{width:43px}

.taskbar{height:28px;background:linear-gradient(#5e6d7b80,transparent 2px),linear-gradient(100deg,#1a3654 0,#263c54 110px,#112a47 260px,#122d50 330px,#273d55 430px,#15375a 490px,#263e57 530px,#102945 640px,#16304d);display:flex;align-items:center;color:#f0f3f5}
.orb{width:28px;height:28px;margin-left:6px}
.folder{width:26px;height:23px;margin-left:20px}.ie{width:24px;height:23px;margin-left:22px}.wmp{width:20px;height:20px;margin-left:22px}
.task{width:43px;height:27px;margin-left:17px;background:linear-gradient(130deg,#d5dde2,#8996a3);border:1px solid #b6c1ca;border-radius:2px;display:flex;align-items:center;justify-content:center}.task svg{width:22px;height:20px}
.tray{margin-left:auto;display:flex;align-items:center;height:28px}
.lang{font:9px "Open Sans",sans-serif;margin:-4px 12px 0 0}
.up{border:3px solid transparent;border-top:0;border-bottom:3px solid #fff;margin-right:9px}
.tray svg{width:13px;height:13px}.net{margin-left:6px}.snd{margin-left:5px}
.date{display:flex;flex-direction:column;align-items:center;width:47px;margin-left:10px;font:500 8.2px/11.5px "Open Sans",sans-serif;padding-bottom:1px}
.desk{width:9px;height:27px;margin-left:8px;border:1px solid #6f879c;background:linear-gradient(130deg,#70859a,#1c3450 50%)}
```
